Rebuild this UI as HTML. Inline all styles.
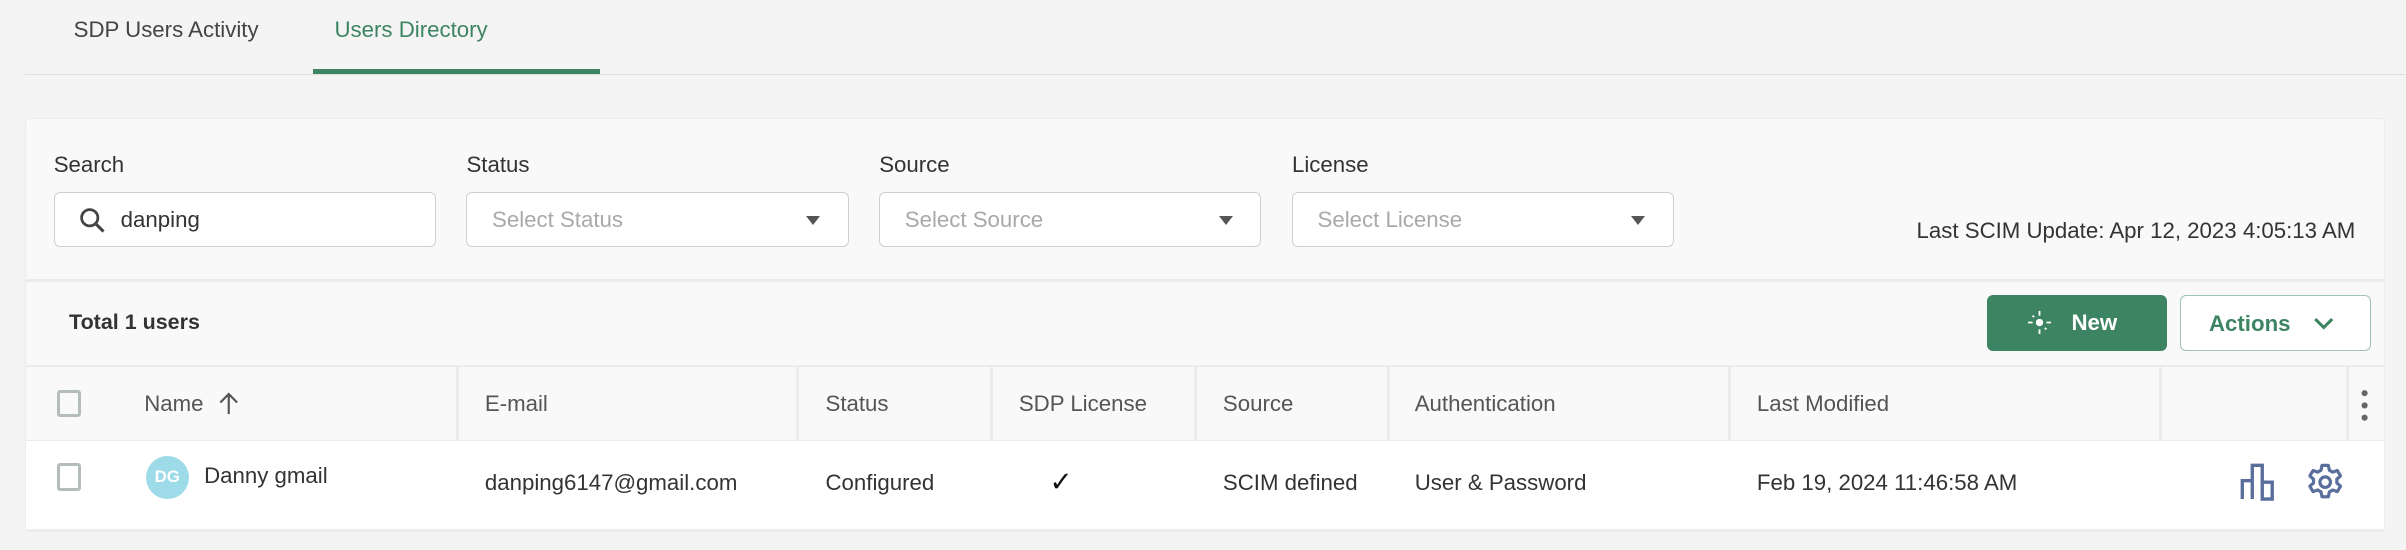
<!DOCTYPE html>
<html><head><meta charset="utf-8"><style>
html,body{margin:0;padding:0;}
body{width:1568px;height:358.5px;overflow:hidden;background:#f4f4f4;zoom:1.5344;font-family:"Liberation Sans",Arial,sans-serif;color:#333;position:relative;font-size:14.5px;}
.abs{position:absolute;}
.tab{top:11px;font-size:14.5px;color:#444;}
.panel{left:16px;top:77px;width:1537px;height:267px;background:#f9f9f9;border:1px solid #ebebeb;border-radius:3px;}
.lbl{top:99px;font-size:14.5px;color:#333;}
.inp{top:125px;height:36px;width:249px;background:#fff;border:1px solid #cfcfcf;border-radius:4px;box-sizing:border-box;}
.ph{position:absolute;left:16px;top:9px;color:#a9a9a9;}
.caret{position:absolute;right:18px;top:15px;width:0;height:0;border-left:5px solid transparent;border-right:5px solid transparent;border-top:6px solid #555;}
.vs{top:239px;width:2px;height:48px;background:#ececec;}
.h{top:255px;color:#555;}
.c{top:306px;color:#333;}
.cb{width:16px;height:18px;border:2px solid #b5bcbc;border-radius:2px;box-sizing:border-box;}
</style></head><body>
<div class="abs tab" style="left:48px">SDP Users Activity</div>
<div class="abs tab" style="left:218px;color:#3d8463">Users Directory</div>
<div class="abs" style="left:16px;top:48px;width:1552px;height:1px;background:#dedede"></div>
<div class="abs" style="left:204px;top:45px;width:187px;height:3.5px;background:#3d8463"></div>

<div class="abs panel"></div>
<div class="abs lbl" style="left:35px">Search</div>
<div class="abs lbl" style="left:304px">Status</div>
<div class="abs lbl" style="left:573px">Source</div>
<div class="abs lbl" style="left:842px">License</div>
<div class="abs inp" style="left:35px">
<svg style="position:absolute;left:16px;top:9px" width="18" height="18" viewBox="0 0 18 18"><circle cx="7" cy="7" r="5.3" fill="none" stroke="#444" stroke-width="1.8"/><path d="M11 11L16 16" stroke="#444" stroke-width="2"/></svg>
<span class="ph" style="left:43px;color:#333">danping</span></div>
<div class="abs inp" style="left:304px"><span class="ph">Select Status</span><div class="caret"></div></div>
<div class="abs inp" style="left:573px"><span class="ph">Select Source</span><div class="caret"></div></div>
<div class="abs inp" style="left:842px"><span class="ph">Select License</span><div class="caret"></div></div>
<div class="abs" style="right:33px;top:142px;color:#333">Last SCIM Update: Apr 12, 2023 4:05:13 AM</div>
<div class="abs" style="left:17px;top:182px;width:1537px;height:1.5px;background:#ececec"></div>

<div class="abs" style="left:45px;top:202px;font-weight:bold;font-size:14px">Total 1 users</div>
<div class="abs" style="left:1295px;top:192px;width:117px;height:37px;background:#3d8463;border-radius:4px;color:#fff;font-weight:bold">
<svg style="position:absolute;left:27px;top:11px" width="15" height="15" viewBox="0 0 15 15" stroke="#fff" stroke-width="1.2"><circle cx="7.5" cy="7.5" r="1.8" fill="#fff"/><path d="M7.5 0v3M7.5 12v3M0 7.5h3M12 7.5h3M3 3l1 1M11 11l1 1"/></svg>
<span style="position:absolute;left:55px;top:10px">New</span></div>
<div class="abs" style="left:1421px;top:192px;width:124px;height:37px;box-sizing:border-box;background:#fff;border:1px solid #9cc4b1;border-radius:4px;color:#3d8463;font-weight:bold">
<span style="position:absolute;left:18px;top:10px">Actions</span>
<svg style="position:absolute;left:86px;top:13px" width="14" height="10" viewBox="0 0 14 10"><path d="M1.5 2l5.5 5.5L12.5 2" fill="none" stroke="#3d8463" stroke-width="2"/></svg></div>

<div class="abs" style="left:17px;top:238px;width:1537px;height:1.5px;background:#ececec"></div>
<div class="abs vs" style="left:297px"></div><div class="abs vs" style="left:519px"></div><div class="abs vs" style="left:645px"></div><div class="abs vs" style="left:778px"></div><div class="abs vs" style="left:904px"></div><div class="abs vs" style="left:1126px"></div><div class="abs vs" style="left:1407px"></div><div class="abs vs" style="left:1529px"></div>
<div class="abs cb" style="left:37px;top:254px"></div>
<div class="abs h" style="left:94px">Name</div>
<svg class="abs" style="left:142px;top:255px" width="14" height="16" viewBox="0 0 14 16"><path d="M7 15V2M1.5 7.5L7 2l5.5 5.5" fill="none" stroke="#555" stroke-width="1.4"/></svg>
<div class="abs h" style="left:316px">E-mail</div>
<div class="abs h" style="left:538px">Status</div>
<div class="abs h" style="left:664px">SDP License</div>
<div class="abs h" style="left:797px">Source</div>
<div class="abs h" style="left:922px">Authentication</div>
<div class="abs h" style="left:1145px">Last Modified</div>
<svg class="abs" style="left:1538px;top:252px" width="6" height="24" viewBox="0 0 6 24" fill="#666"><circle cx="3" cy="4" r="2"/><circle cx="3" cy="12" r="2"/><circle cx="3" cy="20" r="2"/></svg>

<div class="abs" style="left:17px;top:287px;width:1537px;height:57px;background:#fff;border-top:1px solid #ececec;border-bottom:2px solid #ececec"></div>
<div class="abs cb" style="left:37px;top:302px"></div>
<div class="abs" style="left:95px;top:297px;width:28px;height:28px;border-radius:50%;background:#9ddbe8;color:#fff;font-weight:bold;font-size:11px;text-align:center;line-height:28px">DG</div>
<div class="abs" style="left:133px;top:302px">Danny gmail</div>
<div class="abs c" style="left:316px">danping6147@gmail.com</div>
<div class="abs c" style="left:538px">Configured</div>
<div class="abs c" style="left:684px;font-size:18px;top:303px;color:#111">✓</div>
<div class="abs c" style="left:797px">SCIM defined</div>
<div class="abs c" style="left:922px">User &amp; Password</div>
<div class="abs c" style="left:1145px">Feb 19, 2024 11:46:58 AM</div>
<svg class="abs" style="left:1460px;top:302px" width="23" height="25" viewBox="0 0 23 25"><path d="M1.5 23.5V11.5h6.5V23.5M8 23.5V1.5h6.5V23.5M14.5 23.5V12.5h6.5v11z" fill="none" stroke="#5a6e9c" stroke-width="2.2"/></svg>
<svg class="abs" style="left:1503px;top:302px" width="25" height="25" viewBox="0 0 24 24"><path d="M10 1.5h4l.6 3 2.1 1.2 2.9-1 2 3.4-2.3 2v2.4l2.3 2-2 3.4-2.9-1-2.1 1.2-.6 3h-4l-.6-3-2.1-1.2-2.9 1-2-3.4 2.3-2V10.1l-2.3-2 2-3.4 2.9 1L9.4 4.5z" fill="none" stroke="#5a6e9c" stroke-width="2" stroke-linejoin="round"/><circle cx="12" cy="12" r="3.3" fill="none" stroke="#5a6e9c" stroke-width="2"/></svg>
</body></html>
